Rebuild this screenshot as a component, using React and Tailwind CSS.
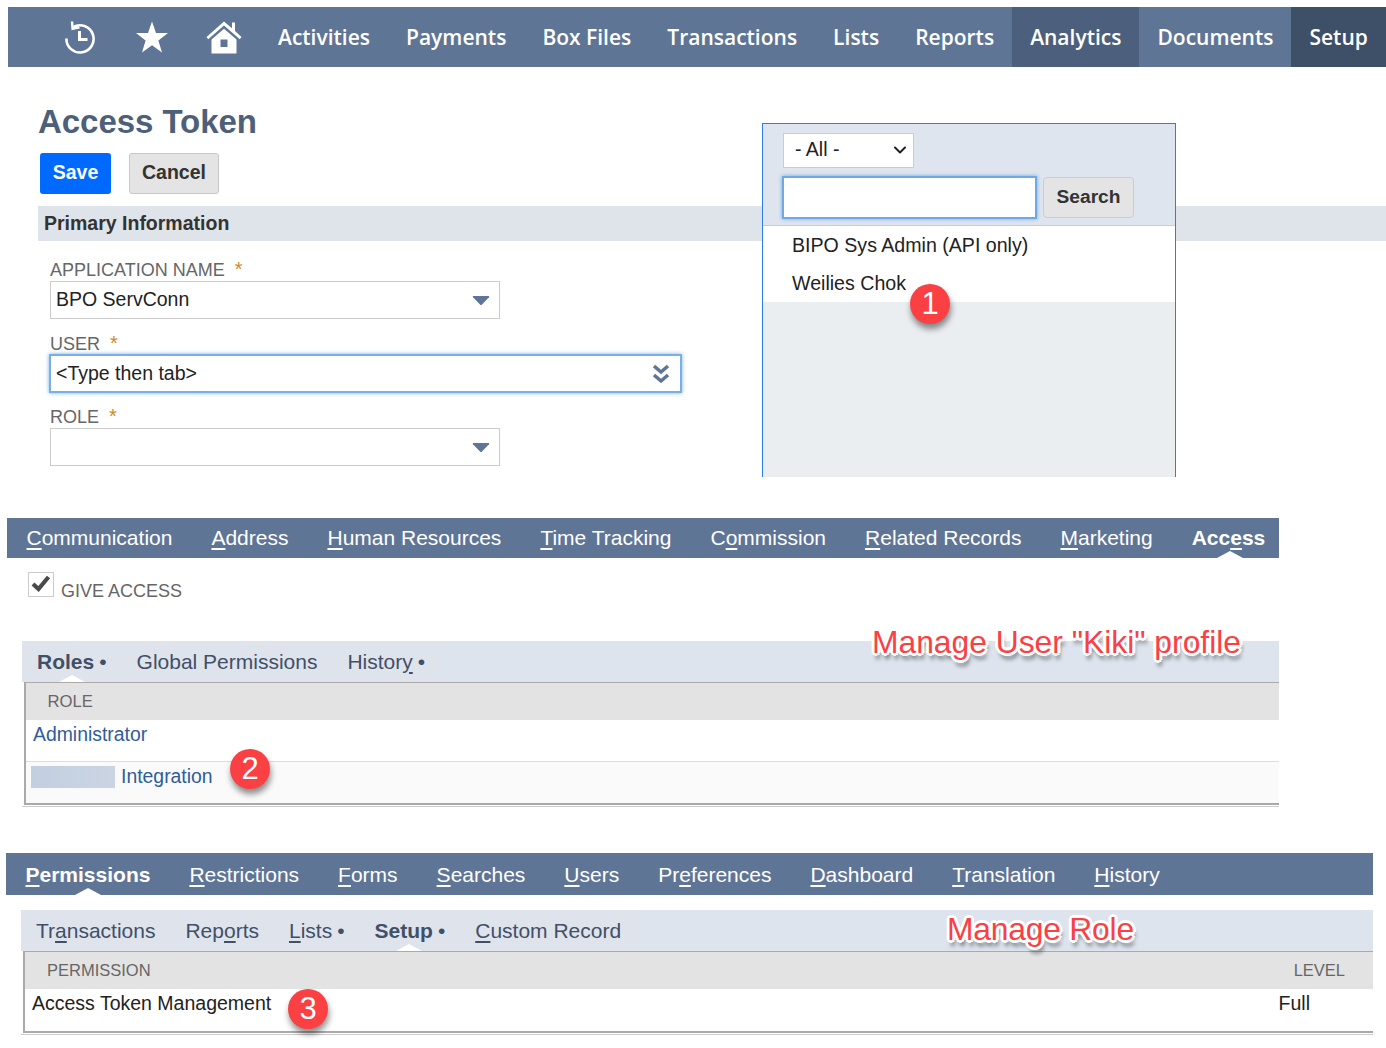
import { ChevronDown } from 'lucide-react';

const navItems = [
  { label: 'Activities' },
  { label: 'Payments' },
  { label: 'Box Files' },
  { label: 'Transactions' },
  { label: 'Lists' },
  { label: 'Reports' },
  { label: 'Analytics', className: 'bg-[#4c5f7d]' },
  { label: 'Documents' },
  { label: 'Setup', className: 'bg-[#3e4f68]' },
];

const userTabs = [
  ['', 'C', 'ommunication'],
  ['', 'A', 'ddress'],
  ['', 'H', 'uman Resources'],
  ['', 'T', 'ime Tracking'],
  ['C', 'o', 'mmission'],
  ['', 'R', 'elated Records'],
  ['', 'M', 'arketing'],
];

const roleTabs = [
  ['', 'R', 'estrictions'],
  ['', 'F', 'orms'],
  ['', 'S', 'earches'],
  ['', 'U', 'sers'],
  ['Pr', 'e', 'ferences'],
  ['', 'D', 'ashboard'],
  ['', 'T', 'ranslation'],
  ['', 'H', 'istory'],
];

function HistoryIcon() {
  return (
    <svg width="34" height="34" viewBox="0 0 34 34" fill="none" stroke="white" strokeWidth="2.6">
      <path d="M10 7.2A13.6 13.6 0 1 1 3.4 18.5" />
      <path d="M9 1.5 L9.6 8.8 L16.5 7.4" strokeWidth="2.4" />
      <path d="M16.5 11 V19.5 H24.5" strokeWidth="3" />
    </svg>
  );
}

function StarIcon() {
  return (
    <svg width="34" height="32" viewBox="0 0 34 32" fill="white">
      <polygon points="17,0.5 21,12 33,12 23.4,19.4 27,31.5 17,24.2 7,31.5 10.6,19.4 1,12 13,12" />
    </svg>
  );
}

function HomeIcon() {
  return (
    <svg width="36" height="33" viewBox="0 0 36 33" fill="white">
      <path d="M18 0.5 L26 7.2 V1.5 H29 V10 L35.5 16 L33.8 18.3 L18 4.6 L2.2 18.3 L0.5 16 Z" />
      <path fillRule="evenodd" d="M18 7.8 L30.5 18.4 V32.5 H5.5 V18.4 Z M14.5 18.5 V26 H21.5 V18.5 Z" />
    </svg>
  );
}

function Caret() {
  return (
    <svg width="18" height="11" viewBox="0 0 18 11" fill="#5f7596">
      <path d="M1.5 1 H16.5 Q17.8 1 17 2.2 L10 9.6 Q9 10.6 8 9.6 L1 2.2 Q0.2 1 1.5 1 Z" />
    </svg>
  );
}

function DoubleChevron() {
  return (
    <svg width="18" height="20" viewBox="0 0 18 20" fill="none" stroke="#5f7596" strokeWidth="3.6">
      <path d="M2 2 L9 8 L16 2" />
      <path d="M2 11 L9 17 L16 11" />
    </svg>
  );
}

function FieldLabel({ children }) {
  return (
    <div className="h-[22px] text-[18px] leading-[20px] text-[#666]">
      {children} <span className="ml-[5px] text-[20px] leading-none text-[#d28a1a]">*</span>
    </div>
  );
}

function AccessKey({ parts, bold }) {
  return (
    <span className={bold ? 'font-bold' : ''}>
      {parts[0]}
      <span className="underline decoration-2 underline-offset-[3px]">{parts[1]}</span>
      {parts[2]}
    </span>
  );
}

function Notch({ className }) {
  return (
    <span className={`absolute bottom-0 h-0 w-0 border-x-[13px] border-b-[7px] border-x-transparent border-b-white ${className}`} />
  );
}

function Badge({ n, className }) {
  return (
    <div className={`absolute flex h-[40px] w-[40px] items-center justify-center rounded-full bg-[#fb4044] text-[31px] text-white shadow-[1px_5px_6px_rgba(0,0,0,0.45)] ${className}`}>
      {n}
    </div>
  );
}

function Annotation({ children, className }) {
  return (
    <div className={`absolute whitespace-nowrap text-[31.8px] leading-[38px] text-[#fb3f44] [text-shadow:-3px_0_0_#fff,3px_0_0_#fff,0_-3px_0_#fff,0_3px_0_#fff,-2px_-2px_0_#fff,2px_-2px_0_#fff,-2px_2px_0_#fff,2px_2px_0_#fff,2px_6px_4px_rgba(0,0,0,0.6)] ${className}`}>
      {children}
    </div>
  );
}

function SubDot() {
  return <span className="ml-[5px] text-[#3f5068]">•</span>;
}

export default function App() {
  return (
    <div className="relative h-[1048px] w-[1386px] overflow-hidden bg-white font-['Liberation_Sans',Arial,sans-serif]">
      {/* main nav */}
      <div className="ml-[8px] mt-[7px] flex h-[60px] whitespace-nowrap bg-[#5f7596] pl-[36px] font-['Open_Sans',sans-serif] text-[21px] font-semibold text-white">
        <div className="flex w-[72px] shrink-0 items-center justify-center"><HistoryIcon /></div>
        <div className="flex w-[72px] shrink-0 items-center justify-center"><StarIcon /></div>
        <div className="flex w-[72px] shrink-0 items-center justify-center"><HomeIcon /></div>
        {navItems.map((item) => (
          <div key={item.label} className={`flex shrink-0 items-center px-[18px] pt-[2px] ${item.className || ''}`}>
            {item.label}
          </div>
        ))}
      </div>

      {/* access token form */}
      <div className="h-[451px]">
        <h1 className="ml-[38px] pt-[35px] text-[33px] font-bold leading-[40px] tracking-[-0.05px] text-[#4d5f79]">Access Token</h1>
        <div className="ml-[40px] mt-[11px] flex gap-[18px] text-[19.5px] font-bold">
          <button className="h-[41px] w-[71px] rounded-[3px] bg-[#0069ff] pb-[1px] text-white">Save</button>
          <button className="h-[41px] w-[90px] rounded-[3px] border border-[#c8c8c8] bg-[#e4e4e4] pb-[1px] text-[#333]">Cancel</button>
        </div>
        <div className="ml-[38px] mt-[12px] flex h-[35px] items-center bg-[#dfe4eb] pl-[6px] text-[19.5px] font-bold text-[#333]">
          Primary Information
        </div>
        <div className="ml-[50px] mt-[18px] text-[19.5px] text-[#222]">
          <FieldLabel>APPLICATION NAME</FieldLabel>
          <div className="flex h-[38px] w-[450px] items-center justify-between border border-[#ccc] pl-[5px] pr-[9px]">
            BPO ServConn <Caret />
          </div>
          <div className="mt-[14px]"><FieldLabel>USER</FieldLabel></div>
          <div className="-mx-[1px] -my-[1px] flex h-[39px] w-[633px] items-center justify-between border-2 border-[#7aaee6] pl-[5px] pr-[10px] shadow-[0_0_4px_#7aaee6]">
            {'<Type then tab>'} <DoubleChevron />
          </div>
          <div className="mt-[14px]"><FieldLabel>ROLE</FieldLabel></div>
          <div className="flex h-[38px] w-[450px] items-center justify-end border border-[#ccc] pr-[9px]">
            <Caret />
          </div>
        </div>
      </div>

      {/* user record */}
      <div className="relative ml-[7px] flex h-[40px] w-[1272px] items-center gap-[39px] bg-[#5f7596] pl-[19.5px] text-[21px] text-white">
        {userTabs.map((t) => (
          <AccessKey key={t[2]} parts={t} />
        ))}
        <AccessKey parts={['Acc', 'e', 'ss']} bold />
        <Notch className="left-[1210px]" />
      </div>
      <div className="ml-[28px] mt-[14px] flex h-[26px] items-start">
        <div className="flex h-[25px] w-[26px] items-start justify-start border border-[#ccc] pl-[2px] pt-[2px]">
          <svg width="20" height="17" viewBox="0 0 20 17" fill="none" stroke="#4a4a4a" strokeWidth="4.2">
            <path d="M2 9 L7.5 14 L17.5 2" />
          </svg>
        </div>
        <span className="ml-[7px] mt-[8px] text-[18px] leading-[22px] text-[#666]">GIVE ACCESS</span>
      </div>

      <div className="ml-[22px] mt-[43px] w-[1257px]">
        <div className="flex h-[41px] bg-[#dde4ee]">
          <div className="relative flex w-[419px] items-center bg-[#dfe3eb] pl-[15px] text-[21px] text-[#3f5068]">
            <span className="font-bold">Roles</span><SubDot />
            <span className="ml-[30px]">Global Permissions</span>
            <span className="ml-[30px]"><AccessKey parts={['Histor', 'y', '']} /></span><SubDot />
            <Notch className="left-[37px]" />
          </div>
        </div>
        <div className="ml-[2px] border-y-2 border-l-2 border-y-[#aaa] border-l-[#aaa] border-t-[1px]">
          <div className="flex h-[37px] items-center bg-[#e3e3e3] pl-[21.5px] text-[16.7px] text-[#666]">ROLE</div>
          <div className="h-[42px] border-b border-[#ddd] pl-[7px] pt-[2px] text-[19.4px] leading-[24px] text-[#2f5d9b]">Administrator</div>
          <div className="flex h-[41px] items-start bg-[#fafafa] pl-[5px] pt-[2px] text-[19.4px] leading-[24px] text-[#2f5d9b]">
            <div className="mt-[2px] h-[22px] w-[84px] bg-gradient-to-r from-[#c3cfe1] to-[#cad4e3]" />
            <span className="ml-[6px]">Integration</span>
          </div>
        </div>
        <div className="mt-[1px] h-px bg-[#ccc]" />
      </div>

      {/* role record */}
      <div className="relative ml-[6px] mt-[46px] flex h-[42px] w-[1367px] items-center gap-[39px] bg-[#5f7596] pl-[19.5px] pt-[2px] text-[21px] text-white">
        <AccessKey parts={['', 'P', 'ermissions']} bold />
        {roleTabs.map((t) => (
          <AccessKey key={t[2]} parts={t} />
        ))}
        <Notch className="left-[69px]" />
      </div>
      <div className="ml-[21px] mt-[15px] w-[1352px]">
        <div className="flex h-[41px] bg-[#dde4ee]">
          <div className="relative flex w-[616px] items-center bg-[#dfe3eb] pl-[15px] text-[21px] text-[#3f5068]">
            <AccessKey parts={['Tr', 'a', 'nsactions']} />
            <span className="ml-[30px]"><AccessKey parts={['Rep', 'o', 'rts']} /></span>
            <span className="ml-[30px]"><AccessKey parts={['', 'L', 'ists']} /></span><SubDot />
            <span className="ml-[30px] font-bold">Setup</span><SubDot />
            <span className="ml-[30px]"><AccessKey parts={['', 'C', 'ustom Record']} /></span>
            <Notch className="left-[375px]" />
          </div>
        </div>
        <div className="ml-[2px] border-y-2 border-l-2 border-y-[#aaa] border-l-[#aaa] border-t-[1px]">
          <div className="flex h-[37px] items-center justify-between bg-[#e3e3e3] pl-[22px] pr-[28px] text-[16.5px] text-[#666]">
            <span>PERMISSION</span>
            <span>LEVEL</span>
          </div>
          <div className="flex h-[42px] justify-between pl-[7px] pr-[63px] pt-[2px] text-[19.5px] leading-[24px] text-[#222]">
            <span>Access Token Management</span>
            <span>Full</span>
          </div>
        </div>
        <div className="mt-[1px] h-px bg-[#ccc]" />
      </div>

      {/* lookup popup over the form */}
      <div className="absolute left-[762px] top-[123px] h-[354px] w-[414px] border-x border-t border-[#2b7de9] bg-[#ebeef1]">
        <div className="h-[102px] border-b border-[#ccc] bg-[#dfe5ee] pl-[20px] pt-[9px]">
          <div className="flex h-[35px] w-[131px] items-center justify-between border border-[#ccc] bg-white pb-[1px] pl-[11px] pr-[3px] text-[19.5px] text-[#222]">
            - All - <ChevronDown size={20} strokeWidth={2.4} />
          </div>
          <div className="mt-[8px] flex items-center">
            <div className="-ml-[1px] h-[43px] w-[255px] border-2 border-[#6ea9e6] bg-white shadow-[0_0_4px_#6ea9e6]" />
            <button className="ml-[6px] h-[41px] w-[91px] rounded-[4px] border border-[#ccc] bg-[#e4e4e4] pb-[1px] text-[19.2px] font-bold text-[#333]">Search</button>
          </div>
        </div>
        <div className="h-[76px] bg-white pl-[29px] text-[19.6px] leading-[38px] text-[#222]">
          <div>BIPO Sys Admin (API only)</div>
          <div>Weilies Chok</div>
        </div>
      </div>

      <Badge n="1" className="left-[910px] top-[284px]" />
      <Badge n="2" className="left-[230px] top-[749px]" />
      <Badge n="3" className="left-[288px] top-[989px]" />
      <Annotation className="left-[872px] top-[623px]">Manage User "Kiki" profile</Annotation>
      <Annotation className="left-[947px] top-[910px] tracking-[-0.2px]">Manage Role</Annotation>
    </div>
  );
}
